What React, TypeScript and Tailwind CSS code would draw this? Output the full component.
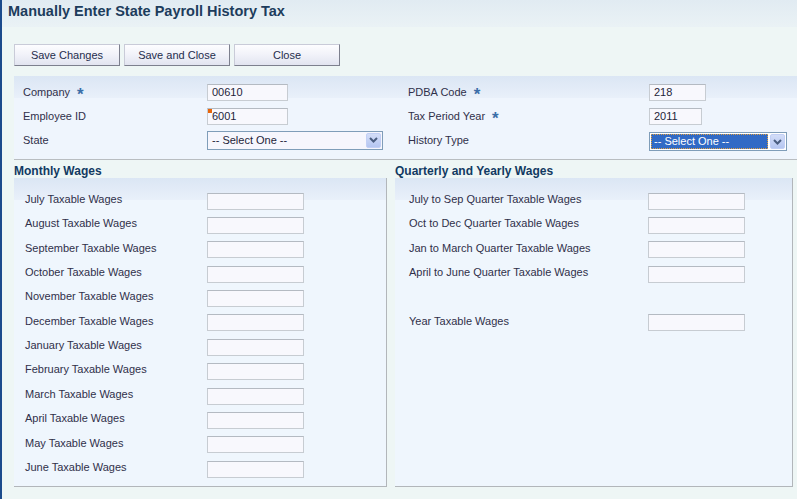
import React from "react";

function Chevron() {
  return (
    <svg width="9" height="6" viewBox="0 0 9 6">
      <path d="M1 1 L4.5 4.5 L8 1" fill="none" stroke="#4a5d80" strokeWidth="2" />
    </svg>
  );
}

function ArrowBtn() {
  return (
    <div className="w-[15px] h-[15px] flex items-center justify-center bg-[linear-gradient(to_bottom,#d3ddf8,#b5c6f1)] border border-[#c2cff5] rounded-[2px]">
      <Chevron />
    </div>
  );
}

function Input({ className, value, marker }: { className: string; value?: string; marker?: boolean }) {
  return (
    <div
      className={
        "relative h-[17px] border border-[#c7ccd2] border-t-[#b4bac2] bg-[#f8f8fd] text-[11px] leading-[15px] pl-[4px] text-[#1e1e3a] " +
        className
      }
    >
      {marker && <div className="absolute left-0 top-0 w-[4px] h-[4px] bg-[#e8650a]" />}
      {value}
    </div>
  );
}

function Label({ text, req }: { text: string; req?: boolean }) {
  return (
    <div className="text-[11px] text-[#30304a] flex items-center">
      {text}
      {req && <span className="ml-[7px] mt-[4px] text-[#3b6ea8] text-[17px] font-bold leading-[11px]">*</span>}
    </div>
  );
}

const monthly = [
  "July Taxable Wages",
  "August Taxable Wages",
  "September Taxable Wages",
  "October Taxable Wages",
  "November Taxable Wages",
  "December Taxable Wages",
  "January Taxable Wages",
  "February Taxable Wages",
  "March Taxable Wages",
  "April Taxable Wages",
  "May Taxable Wages",
  "June Taxable Wages",
];

const quarterly = [
  "July to Sep Quarter Taxable Wages",
  "Oct to Dec Quarter Taxable Wages",
  "Jan to March Quarter Taxable Wages",
  "April to June Quarter Taxable Wages",
  "",
  "Year Taxable Wages",
];

function Btn({ text, w }: { text: string; w: string }) {
  return (
    <div
      className={
        "h-[22px] flex items-center justify-center text-[11px] text-[#1f2d4d] bg-[linear-gradient(to_bottom,#fdfdff,#f1f2f9_50%,#e2e4f0)] border border-[#c9cbd8] border-r-[#7d808e] border-b-[#7d808e] " +
        w
      }
    >
      {text}
    </div>
  );
}

export default function App() {
  return (
    <div className="w-[797px] h-[499px] overflow-hidden bg-[#eef6f5] border-l-2 border-[#1c4b8c] font-['Liberation_Sans',Arial,sans-serif]">
      <div className="h-[27px] pl-[6px] pt-[2px] bg-[linear-gradient(to_bottom,#e1ebf2,#eaf2f5)]">
        <div className="text-[14.5px] leading-[18px] font-bold text-[#1d3c5c]">Manually Enter State Payroll History Tax</div>
      </div>

      <div className="flex gap-[4px] pl-[12px] mt-[17px]">
        <Btn text="Save Changes" w="w-[106px]" />
        <Btn text="Save and Close" w="w-[106px]" />
        <Btn text="Close" w="w-[106px]" />
      </div>

      <div className="ml-[12px] mt-[10px] border-b border-[#b9bdc1] bg-[linear-gradient(to_bottom,#dbe6f4,#e9f0fa_22px,#eff5fd_22px)] pl-[9px] pt-[4px] pb-[7px] flex">
        <div className="w-[385px] flex flex-col">
          <div className="h-[24px] flex items-center">
            <div className="w-[184px]"><Label text="Company" req /></div>
            <Input className="w-[81px]" value="00610" />
          </div>
          <div className="h-[24px] flex items-center">
            <div className="w-[184px]"><Label text="Employee ID" /></div>
            <Input className="w-[81px]" value="6001" marker />
          </div>
          <div className="h-[24px] flex items-center">
            <div className="w-[184px]"><Label text="State" /></div>
            <div className="w-[176px] h-[19px] border border-[#7f9db9] bg-[#f6f6fd] flex items-center justify-between pl-[4px] pr-[1px]">
              <span className="text-[11px] text-[#1e1e3a]">-- Select One --</span>
              <ArrowBtn />
            </div>
          </div>
        </div>
        <div className="flex-1 flex flex-col">
          <div className="h-[24px] flex items-center">
            <div className="w-[241px]"><Label text="PDBA Code" req /></div>
            <Input className="w-[57px]" value="218" />
          </div>
          <div className="h-[24px] flex items-center">
            <div className="w-[241px]"><Label text="Tax Period Year" req /></div>
            <Input className="w-[53px]" value="2011" />
          </div>
          <div className="h-[24px] flex items-center">
            <div className="w-[241px]"><Label text="History Type" /></div>
            <div className="w-[138px] h-[19px] mt-[3px] border border-[#7f9db9] bg-white flex items-center justify-between p-[1px]">
              <div className="flex-1 h-full mr-[2px] bg-[#316ac5] border border-dotted border-[#e0a040] flex items-center pl-[2px]">
                <span className="text-[11px] text-white">-- Select One --</span>
              </div>
              <ArrowBtn />
            </div>
          </div>
        </div>
      </div>

      <div className="flex gap-[8px] pl-[12px]">
        <div className="w-[373px] flex flex-col">
          <div className="h-[18px] flex items-end">
            <div className="text-[12px] leading-[14px] font-bold text-[#123a62]">Monthly Wages</div>
          </div>
          <div className="h-[309px] border-r border-b border-[#b2b6ba] bg-[linear-gradient(to_bottom,#dbe6f4,#e9f0fa_22px,#eff6fd_22px)] pt-[9px] pl-[11px]">
            {monthly.map((m) => (
              <div key={m} className="h-[24.36px] flex items-center">
                <div className="w-[182px]"><Label text={m} /></div>
                <Input className="w-[97px] mt-[4px]" />
              </div>
            ))}
          </div>
        </div>
        <div className="w-[398px] flex flex-col">
          <div className="h-[18px] flex items-end">
            <div className="text-[12px] leading-[14px] font-bold text-[#123a62]">Quarterly and Yearly Wages</div>
          </div>
          <div className="h-[309px] border-r border-b border-[#b2b6ba] bg-[linear-gradient(to_bottom,#dbe6f4,#e9f0fa_22px,#eff6fd_22px)] pt-[9px] pl-[14px]">
            {quarterly.map((m, i) => (
              <div key={i} className="h-[24.36px] flex items-center">
                {m && (
                  <>
                    <div className="w-[239px]"><Label text={m} /></div>
                    <Input className="w-[97px] mt-[4px]" />
                  </>
                )}
              </div>
            ))}
          </div>
        </div>
      </div>
    </div>
  );
}
